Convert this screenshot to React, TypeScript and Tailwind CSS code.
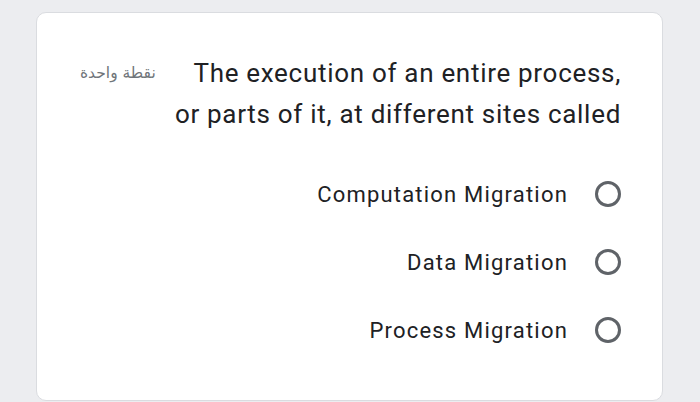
import React from "react";

const options = ["Computation Migration", "Data Migration", "Process Migration"];

export default function App() {
  return (
    <div className="w-[700px] h-[402px] overflow-hidden bg-[#ecedf0] pt-[12px]" style={{ fontFamily: "Roboto, 'Liberation Sans', sans-serif" }}>
      <div className="ml-[36px] w-[627px] h-[389px] bg-white border border-[#dadce0] rounded-[10px] pt-[40px] pl-[43px] pr-[41px]">
        <div className="flex items-start justify-between">
          <div className="text-[15.5px] text-[#70757a] leading-[41px] whitespace-nowrap" dir="rtl" style={{ fontFamily: "'DejaVu Sans', 'Noto Sans', sans-serif" }}>
            نقطة واحدة
          </div>
          <div className="text-right text-[26px] tracking-[0.7px] leading-[41px] text-[#202124] whitespace-nowrap">
            <div>The execution of an entire process,</div>
            <div>or parts of it, at different sites called</div>
          </div>
        </div>
        <div className="mt-[25px] flex flex-col">
          {options.map((o) => (
            <div key={o} className="h-[68px] flex items-center justify-end gap-[27px]">
              <span className="text-[22px] tracking-[1.2px] text-[#202124]">{o}</span>
              <span className="w-[26px] h-[26px] rounded-full border-[3px] border-[#5f6368] shrink-0" />
            </div>
          ))}
        </div>
      </div>
    </div>
  );
}
